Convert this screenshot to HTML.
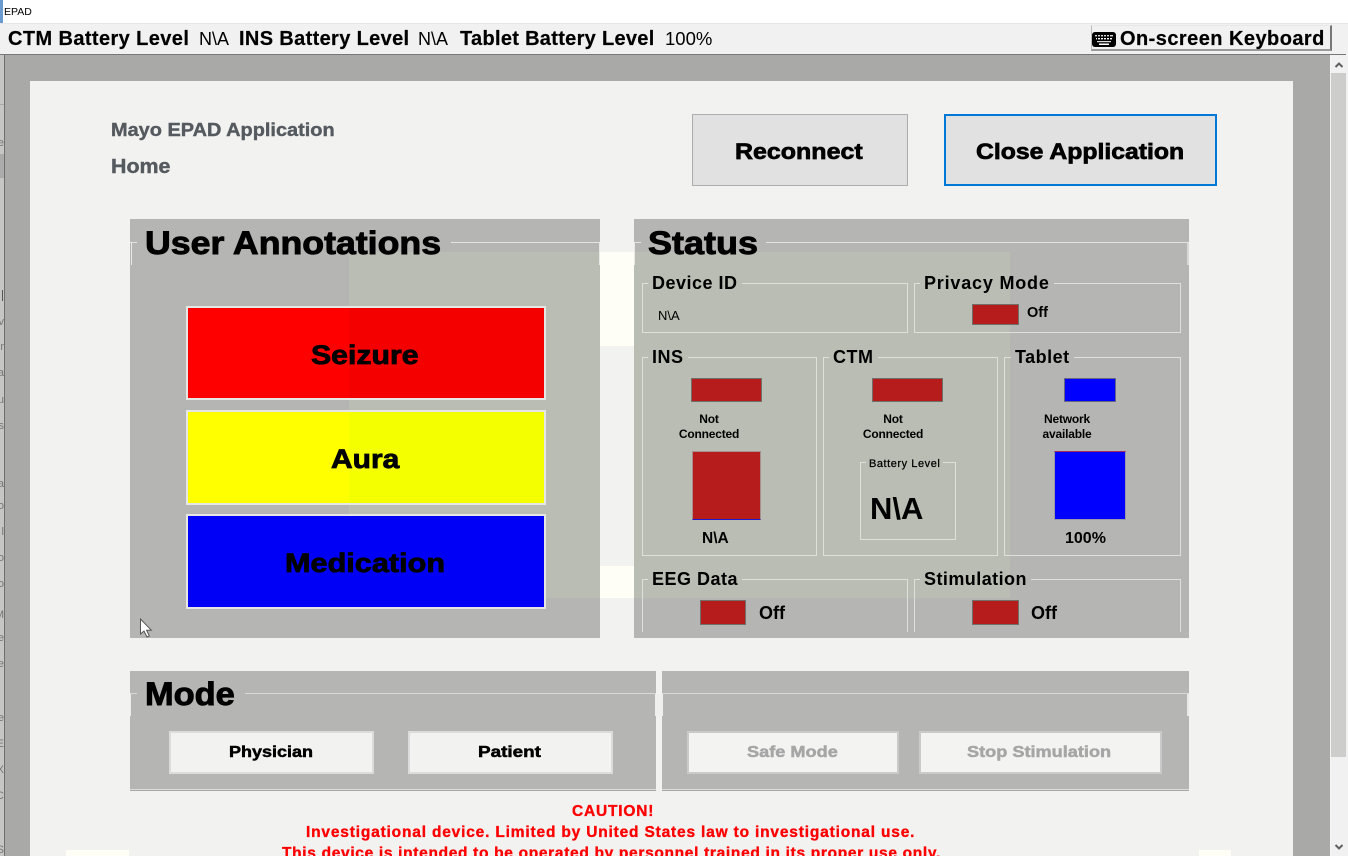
<!DOCTYPE html>
<html lang="en">
<head>
<meta charset="utf-8">
<title>EPAD</title>
<style>
html,body{margin:0;padding:0;width:1348px;height:856px;overflow:hidden;background:#f2f2f1;}
body{position:relative;font-family:"Liberation Sans",Arial,sans-serif;color:#000;}
.a{position:absolute;box-sizing:border-box;}
.t{position:absolute;white-space:nowrap;font-weight:bold;}
.tb{font-size:20px;line-height:20px;top:29px;letter-spacing:.4px;-webkit-text-stroke:.2px #000;}
.tr{font-size:18px;line-height:20px;top:29px;font-weight:normal;}
.bg{font-size:22px;line-height:24px;top:139.5px;transform-origin:left center;-webkit-text-stroke:.7px #000;}
.h{font-size:32px;line-height:36px;transform-origin:left center;-webkit-text-stroke:.9px #000;}
.ab{font-size:27px;line-height:30px;transform-origin:left center;-webkit-text-stroke:.8px #000;}
.act{border:2px solid #e6e6e4;}
fieldset{position:absolute;margin:0;padding:0;border:1px solid #dfe0da;box-sizing:border-box;min-width:0;}
legend{margin-left:5px;padding:0 4px;font:bold 18px/20px "Liberation Sans",Arial,sans-serif;letter-spacing:.5px;color:#000;white-space:nowrap;}
.rd{background:#b71c1c;border:1px solid #70706a;}
.bl{background:#0000ff;border:1px solid #666680;}
.sm{font-size:12px;line-height:15px;text-align:center;letter-spacing:-.2px;}
.mb{border:2px solid #dcdcdc;background:#f2f2f1;}
.db{border:2px solid #cacaca;background:#f3f3f2;}
.mt{font-size:16px;line-height:20px;top:743px;transform-origin:left center;-webkit-text-stroke:.5px currentColor;}
.c{font-size:15.5px;line-height:20px;letter-spacing:.7px;color:#ff0000;-webkit-text-stroke:.35px #ff0000;}
.st{position:absolute;left:0;width:4px;overflow:hidden;font-size:11px;line-height:12px;color:#777;text-align:right;direction:rtl;}
</style>
</head>
<body>
<!-- title bar -->
<div class="a" style="left:0;top:0;width:1348px;height:23px;background:#fff;"></div>
<div class="a" style="left:0;top:0;width:3px;height:23px;background:#6a9bd0;"></div>
<div class="t" style="left:4px;top:6px;font-size:10.5px;line-height:13px;font-weight:normal;">EPAD</div>
<div class="a" style="left:0;top:23px;width:1348px;height:1px;background:#e6e6e6;"></div>
<!-- toolbar -->
<div class="a" style="left:0;top:24px;width:1348px;height:30px;background:#f1f1f1;"></div>
<div class="t tb" style="left:8px;">CTM Battery Level</div>
<div class="t tr" style="left:199px;">N\A</div>
<div class="t tb" style="left:239px;letter-spacing:.35px;">INS Battery Level</div>
<div class="t tr" style="left:418px;">N\A</div>
<div class="t tb" style="left:460px;letter-spacing:.3px;">Tablet Battery Level</div>
<div class="t tr" style="left:665px;font-size:18.5px;">100%</div>
<div class="a" style="left:1091px;top:25px;width:241px;height:26px;background:#f1f1f1;border:1px solid #fff;border-left-color:#bbb;border-top-color:#e8e8e8;border-right:2px solid #777;border-bottom:2px solid #999;"></div>
<svg class="a" style="left:1092px;top:32px;" width="24" height="15" viewBox="0 0 24 15">
<rect x="0" y="0" width="24" height="15" rx="3" fill="#000"/>
<g fill="#fff">
<rect x="3" y="3" width="18" height="1.4" fill="#ddd"/>
<rect x="4" y="6" width="16" height="1.4"/>
<rect x="5" y="9" width="14" height="1.2" fill="#ddd"/>
<rect x="7" y="11.5" width="10" height="1.5"/>
</g>
<g fill="#000">
<rect x="5" y="3" width="1" height="5"/><rect x="8" y="3" width="1" height="5"/><rect x="11" y="3" width="1" height="5"/><rect x="14" y="3" width="1" height="5"/><rect x="17" y="3" width="1" height="5"/>
</g>
</svg>
<div class="t tb" style="left:1120px;letter-spacing:.45px;">On-screen Keyboard</div>
<div class="a" style="left:0;top:54px;width:1346px;height:1px;background:#777;"></div>

<!-- left strip -->
<div class="a" style="left:0;top:55px;width:4px;height:801px;background:#c6c6c5;"></div>
<div class="a" style="left:0;top:104px;width:4px;height:1px;background:#a8a8a8;"></div>
<div class="a" style="left:0;top:154px;width:4px;height:24px;background:#ababab;"></div>
<div class="a" style="left:2px;top:290px;width:1px;height:11px;background:#555;"></div>
<div class="st" style="top:137px;">e</div>
<div class="st" style="top:316px;">v</div>
<div class="st" style="top:341px;">r</div>
<div class="st" style="top:367px;">a</div>
<div class="st" style="top:394px;">u</div>
<div class="st" style="top:420px;">s</div>
<div class="st" style="top:478px;">a</div>
<div class="st" style="top:500px;">o</div>
<div class="st" style="top:526px;">l</div>
<div class="st" style="top:552px;">o</div>
<div class="st" style="top:578px;">o</div>
<div class="st" style="top:609px;">M</div>
<div class="st" style="top:632px;">e</div>
<div class="st" style="top:658px;">e</div>
<div class="st" style="top:712px;">e</div>
<div class="st" style="top:738px;">E</div>
<div class="st" style="top:764px;">X</div>
<div class="st" style="top:790px;">C</div>
<div class="st" style="top:844px;">S</div>
<div class="a" style="left:4px;top:55px;width:1px;height:801px;background:#6f6f6f;"></div>

<!-- gray backdrop -->
<div class="a" style="left:5px;top:55px;width:1325px;height:801px;background:#a9a9a8;"></div>
<div class="a" style="left:1330px;top:55px;width:1px;height:801px;background:#f4f4f4;"></div>
<!-- scrollbar -->
<div class="a" style="left:1331px;top:55px;width:17px;height:801px;background:#f1f1f1;"></div>
<div class="a" style="left:1331px;top:73px;width:15px;height:684px;background:#cdcdcb;"></div>
<svg class="a" style="left:1334px;top:61px;" width="10" height="8" viewBox="0 0 10 8"><path d="M1.5 6 L5 2.5 L8.5 6" fill="none" stroke="#606060" stroke-width="2"/></svg>
<svg class="a" style="left:1334px;top:843px;" width="10" height="8" viewBox="0 0 10 8"><path d="M1.5 2 L5 5.5 L8.5 2" fill="none" stroke="#606060" stroke-width="2"/></svg>

<!-- page -->
<div class="a" style="left:30px;top:81px;width:1263px;height:775px;background:#f2f2f1;"></div>
<div class="t" style="left:111px;top:119px;font-size:18.5px;line-height:21px;transform-origin:left center;transform:scaleX(1.077);color:#555a5f;-webkit-text-stroke:.4px #555a5f;">Mayo EPAD Application</div>
<div class="t" style="left:111px;top:156px;font-size:20px;line-height:22px;transform-origin:left center;transform:scaleX(1.07);color:#555a5f;-webkit-text-stroke:.4px #555a5f;">Home</div>

<div class="a" style="left:692px;top:114px;width:216px;height:72px;background:#e1e1e1;border:1px solid #adadad;"></div>
<div class="t bg" style="left:735px;transform:scaleX(1.135);">Reconnect</div>
<div class="a" style="left:944px;top:114px;width:273px;height:72px;background:#e1e1e1;border:2px solid #0078d7;"></div>
<div class="t bg" style="left:976px;transform:scaleX(1.125);">Close Application</div>

<!-- cream overlay bits on page -->
<div class="a" style="left:600px;top:252px;width:34px;height:94px;background:#fffef6;"></div>
<div class="a" style="left:600px;top:566px;width:34px;height:32px;background:#fffef6;"></div>
<div class="a" style="left:66px;top:850px;width:63px;height:6px;background:#fffef6;"></div>
<div class="a" style="left:1199px;top:850px;width:32px;height:6px;background:#fffef6;"></div>

<!-- user annotations panel -->
<div class="a" style="left:130px;top:219px;width:470px;height:419px;background:#b5b5b3;"></div>
<div class="a" style="left:349px;top:252px;width:251px;height:346px;background:#babdb3;"></div>
<div class="a" style="left:130px;top:242px;width:7px;height:1px;background:#e4e4e2;"></div>
<div class="a" style="left:451px;top:242px;width:149px;height:1px;background:#e4e4e2;"></div>
<div class="a" style="left:131px;top:243px;width:1px;height:22px;background:#e8e8e6;"></div>
<div class="a" style="left:599px;top:243px;width:1px;height:22px;background:#e8e8e6;"></div>
<div class="t h" style="left:145px;top:225px;transform:scaleX(1.115);">User Annotations</div>

<div class="a act" style="left:186px;top:306px;width:360px;height:94px;background:linear-gradient(90deg,#ff0000 0,#ff0000 161px,#f40000 161px);"></div>
<div class="t ab" style="left:311px;top:339.5px;transform:scaleX(1.12);">Seizure</div>
<div class="a act" style="left:186px;top:410px;width:360px;height:95px;background:linear-gradient(90deg,#ffff00 0,#ffff00 161px,#f4ff00 161px);"></div>
<div class="t ab" style="left:331px;top:444px;transform:scaleX(1.11);">Aura</div>
<div class="a act" style="left:186px;top:514px;width:360px;height:95px;background:#0000f6;"></div>
<div class="t ab" style="left:285px;top:548px;transform:scaleX(1.135);">Medication</div>

<svg class="a" style="left:139px;top:618px;" width="14" height="20" viewBox="0 0 14 20"><path d="M1.5 1 L1.5 16 L5 13 L8 19 L10.3 18 L7.6 12.2 L12.3 12.2 Z" fill="#fff" stroke="#555" stroke-width="1"/></svg>

<!-- status panel -->
<div class="a" style="left:634px;top:219px;width:555px;height:419px;background:#b5b5b3;"></div>
<div class="a" style="left:634px;top:252px;width:376px;height:346px;background:#babdb3;"></div>
<div class="a" style="left:634px;top:242px;width:7px;height:1px;background:#e4e4e2;"></div>
<div class="a" style="left:766px;top:242px;width:423px;height:1px;background:#e4e4e2;"></div>
<div class="a" style="left:634px;top:243px;width:1px;height:22px;background:#e8e8e6;"></div>
<div class="a" style="left:1187px;top:243px;width:2px;height:22px;background:#d8d8d6;"></div>
<div class="t h" style="left:648px;top:225px;transform:scaleX(1.125);">Status</div>

<fieldset style="left:642px;top:273px;width:266px;height:60px;"><legend>Device ID</legend></fieldset>
<div class="t" style="left:658px;top:308px;font-size:13px;line-height:16px;font-weight:normal;">N\A</div>
<fieldset style="left:914px;top:273px;width:267px;height:60px;"><legend style="letter-spacing:.8px;">Privacy Mode</legend></fieldset>
<div class="a rd" style="left:972px;top:304px;width:47px;height:21px;"></div>
<div class="t" style="left:1027px;top:305px;font-size:14.5px;line-height:17px;">Off</div>

<fieldset style="left:642px;top:347px;width:175px;height:209px;"><legend>INS</legend></fieldset>
<fieldset style="left:823px;top:347px;width:175px;height:209px;"><legend>CTM</legend></fieldset>
<fieldset style="left:1004px;top:347px;width:177px;height:209px;"><legend style="margin-left:6px;">Tablet</legend></fieldset>

<div class="a rd" style="left:691px;top:378px;width:71px;height:24px;"></div>
<div class="t sm" style="left:669px;top:411.5px;width:80px;">Not<br>Connected</div>
<div class="a" style="left:692px;top:451px;width:69px;height:69px;background:#b71c1c;border:1px solid #a98f8c;border-bottom:1px solid #1a1ad0;"></div>
<div class="t" style="left:702px;top:530px;font-size:15.5px;line-height:18px;">N\A</div>

<div class="a rd" style="left:872px;top:378px;width:71px;height:24px;"></div>
<div class="t sm" style="left:853px;top:411.5px;width:80px;">Not<br>Connected</div>
<fieldset style="left:860px;top:455px;width:96px;height:85px;"><legend style="position:relative;top:1.5px;font:normal 11px/14px 'Liberation Sans',Arial,sans-serif;letter-spacing:.55px;margin-left:5px;padding:0 3px;-webkit-text-stroke:.25px #000;">Battery Level</legend></fieldset>
<div class="t" style="left:870px;top:491px;font-size:31px;line-height:36px;">N\A</div>

<div class="a bl" style="left:1064px;top:378px;width:52px;height:24px;"></div>
<div class="t sm" style="left:1027px;top:411.5px;width:80px;">Network<br>available</div>
<div class="a" style="left:1054px;top:451px;width:72px;height:69px;background:#0000ff;border:1px solid #9a9aa8;border-top:1px solid #a02a5a;"></div>
<div class="t" style="left:1065px;top:530px;font-size:16px;line-height:18px;">100%</div>

<fieldset style="left:642px;top:569px;width:266px;height:63px;border-bottom:0;"><legend>EEG Data</legend></fieldset>
<div class="a rd" style="left:700px;top:600px;width:46px;height:25px;"></div>
<div class="t" style="left:759px;top:603px;font-size:18px;line-height:21px;">Off</div>
<fieldset style="left:914px;top:569px;width:267px;height:63px;border-bottom:0;"><legend style="letter-spacing:.45px;">Stimulation</legend></fieldset>
<div class="a rd" style="left:972px;top:600px;width:47px;height:25px;"></div>
<div class="t" style="left:1031px;top:603px;font-size:18px;line-height:21px;">Off</div>

<!-- mode panels -->
<div class="a" style="left:130px;top:671px;width:526px;height:118px;background:#b5b5b3;"></div>
<div class="a" style="left:662px;top:671px;width:527px;height:118px;background:#b5b5b3;"></div>
<div class="a" style="left:130px;top:693px;width:7px;height:1px;background:#d8d8d6;"></div>
<div class="a" style="left:245px;top:693px;width:411px;height:1px;background:#d8d8d6;"></div>
<div class="a" style="left:662px;top:693px;width:527px;height:1px;background:#d8d8d6;"></div>
<div class="a" style="left:130px;top:694px;width:1px;height:22px;background:#ecece9;"></div>
<div class="a" style="left:655px;top:694px;width:8px;height:22px;background:#efefed;"></div>
<div class="a" style="left:1187px;top:694px;width:2px;height:22px;background:#e8e8e6;"></div>
<div class="a" style="left:130px;top:789px;width:526px;height:1px;background:#dcdcda;"></div>
<div class="a" style="left:130px;top:790px;width:526px;height:1px;background:#a8a8a6;"></div>
<div class="a" style="left:662px;top:789px;width:527px;height:1px;background:#dcdcda;"></div>
<div class="a" style="left:662px;top:790px;width:527px;height:1px;background:#a8a8a6;"></div>
<div class="t h" style="left:145px;top:676px;transform:scaleX(1.075);">Mode</div>

<div class="a mb" style="left:169px;top:731px;width:205px;height:43px;"></div>
<div class="t mt" style="left:229px;transform:scaleX(1.125);">Physician</div>
<div class="a mb" style="left:408px;top:731px;width:205px;height:43px;"></div>
<div class="t mt" style="left:478px;transform:scaleX(1.18);">Patient</div>
<div class="a db" style="left:687px;top:731px;width:212px;height:43px;"></div>
<div class="t mt" style="left:747px;color:#a6a6a6;transform:scaleX(1.135);">Safe Mode</div>
<div class="a db" style="left:919px;top:731px;width:243px;height:43px;"></div>
<div class="t mt" style="left:967px;color:#a6a6a6;transform:scaleX(1.134);">Stop Stimulation</div>

<!-- caution -->
<div class="t c" style="left:572px;top:802px;letter-spacing:.8px;">CAUTION!</div>
<div class="t c" style="left:306px;top:823px;letter-spacing:.82px;">Investigational device. Limited by United States law to investigational use.</div>
<div class="t c" style="left:282px;top:844px;letter-spacing:.68px;">This device is intended to be operated by personnel trained in its proper use only.</div>
</body>
</html>
